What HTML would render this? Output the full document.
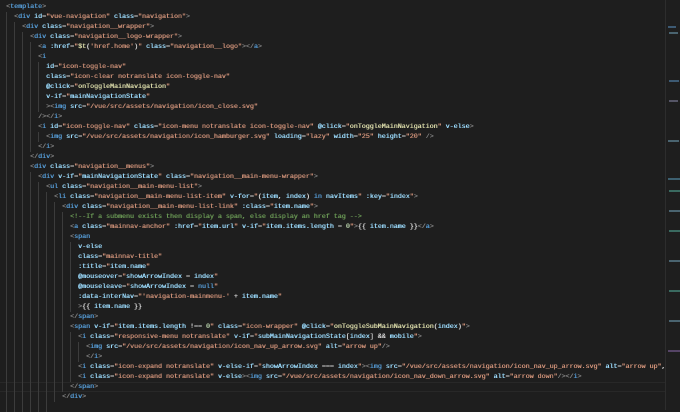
<!DOCTYPE html>
<html><head><meta charset="utf-8"><style>
html,body{margin:0;padding:0;background:#1e1e1e;width:680px;height:410px;overflow:hidden}
#ed{position:absolute;left:0;top:2px;font-family:"Liberation Mono",monospace;font-size:6.67px;color:#d4d4d4;text-shadow:0.35px 0 currentColor}
.l{height:10px;line-height:10px;white-space:pre;padding-left:6px;position:relative}
.g{display:inline-block;height:10px;vertical-align:top;background:repeating-linear-gradient(to right,#3c3c3c 0 1px,transparent 1px 8px)}
.t{color:#569cd6}.p{color:#808080}.a{color:#9cdcfe}.s{color:#ce9178}.v{color:#9cdcfe}.f{color:#dcdcaa}.c{color:#6a9955}.k{color:#569cd6}.n{color:#b5cea8}
#hl{position:absolute;left:0;top:382px;width:665px;height:10px;border-top:1px solid #282828;border-bottom:1px solid #282828;box-sizing:border-box}
#mm{position:absolute;left:665px;top:0;width:15px;height:410px;background:#1e1e1e;border-left:1px solid #2d2d2d}
#mm i{position:absolute;height:2px;display:block}
</style></head><body>
<div id="hl"></div>
<div id="ed">
<div class="l"><span class="p">&lt;</span><span class="t">template</span><span class="p">&gt;</span></div>
<div class="l"><span class="g" style="width:8px"></span><span class="p">&lt;</span><span class="t">div</span> <span class="a">id</span>=<span class="s">"vue-navigation"</span> <span class="a">class</span>=<span class="s">"navigation"</span><span class="p">&gt;</span></div>
<div class="l"><span class="g" style="width:16px"></span><span class="p">&lt;</span><span class="t">div</span> <span class="a">class</span>=<span class="s">"navigation__wrapper"</span><span class="p">&gt;</span></div>
<div class="l"><span class="g" style="width:24px"></span><span class="p">&lt;</span><span class="t">div</span> <span class="a">class</span>=<span class="s">"navigation__logo-wrapper"</span><span class="p">&gt;</span></div>
<div class="l"><span class="g" style="width:32px"></span><span class="p">&lt;</span><span class="t">a</span> <span class="a">:href</span>=<span class="s">"</span><span class="f">$t</span>(<span class="s">'href.home'</span>)<span class="s">"</span> <span class="a">class</span>=<span class="s">"navigation__logo"</span><span class="p">&gt;&lt;/</span><span class="t">a</span><span class="p">&gt;</span></div>
<div class="l"><span class="g" style="width:32px"></span><span class="p">&lt;</span><span class="t">i</span></div>
<div class="l"><span class="g" style="width:40px"></span><span class="a">id</span>=<span class="s">"icon-toggle-nav"</span></div>
<div class="l"><span class="g" style="width:40px"></span><span class="a">class</span>=<span class="s">"icon-clear notranslate icon-toggle-nav"</span></div>
<div class="l"><span class="g" style="width:40px"></span><span class="a">@click</span>=<span class="s">"</span><span class="f">onToggleMainNavigation</span><span class="s">"</span></div>
<div class="l"><span class="g" style="width:40px"></span><span class="a">v-if</span>=<span class="s">"</span><span class="v">mainNavigationState</span><span class="s">"</span></div>
<div class="l"><span class="g" style="width:40px"></span><span class="p">&gt;&lt;</span><span class="t">img</span> <span class="a">src</span>=<span class="s">"/vue/src/assets/navigation/icon_close.svg"</span></div>
<div class="l"><span class="g" style="width:32px"></span><span class="p">/&gt;&lt;/</span><span class="t">i</span><span class="p">&gt;</span></div>
<div class="l"><span class="g" style="width:32px"></span><span class="p">&lt;</span><span class="t">i</span> <span class="a">id</span>=<span class="s">"icon-toggle-nav"</span> <span class="a">class</span>=<span class="s">"icon-menu notranslate icon-toggle-nav"</span> <span class="a">@click</span>=<span class="s">"</span><span class="f">onToggleMainNavigation</span><span class="s">"</span> <span class="a">v-else</span><span class="p">&gt;</span></div>
<div class="l"><span class="g" style="width:40px"></span><span class="p">&lt;</span><span class="t">img</span> <span class="a">src</span>=<span class="s">"/vue/src/assets/navigation/icon_hamburger.svg"</span> <span class="a">loading</span>=<span class="s">"lazy"</span> <span class="a">width</span>=<span class="s">"25"</span> <span class="a">height</span>=<span class="s">"20"</span> <span class="p">/&gt;</span></div>
<div class="l"><span class="g" style="width:32px"></span><span class="p">&lt;/</span><span class="t">i</span><span class="p">&gt;</span></div>
<div class="l"><span class="g" style="width:24px"></span><span class="p">&lt;/</span><span class="t">div</span><span class="p">&gt;</span></div>
<div class="l"><span class="g" style="width:24px"></span><span class="p">&lt;</span><span class="t">div</span> <span class="a">class</span>=<span class="s">"navigation__menus"</span><span class="p">&gt;</span></div>
<div class="l"><span class="g" style="width:32px"></span><span class="p">&lt;</span><span class="t">div</span> <span class="a">v-if</span>=<span class="s">"</span><span class="v">mainNavigationState</span><span class="s">"</span> <span class="a">class</span>=<span class="s">"navigation__main-menu-wrapper"</span><span class="p">&gt;</span></div>
<div class="l"><span class="g" style="width:40px"></span><span class="p">&lt;</span><span class="t">ul</span> <span class="a">class</span>=<span class="s">"navigation__main-menu-list"</span><span class="p">&gt;</span></div>
<div class="l"><span class="g" style="width:48px"></span><span class="p">&lt;</span><span class="t">li</span> <span class="a">class</span>=<span class="s">"navigation__main-menu-list-item"</span> <span class="a">v-for</span>=<span class="s">"</span>(<span class="v">item</span>, <span class="v">index</span>) <span class="k">in</span> <span class="v">navItems</span><span class="s">"</span> <span class="a">:key</span>=<span class="s">"</span><span class="v">index</span><span class="s">"</span><span class="p">&gt;</span></div>
<div class="l"><span class="g" style="width:56px"></span><span class="p">&lt;</span><span class="t">div</span> <span class="a">class</span>=<span class="s">"navigation__main-menu-list-link"</span> <span class="a">:class</span>=<span class="s">"</span><span class="v">item.name</span><span class="s">"</span><span class="p">&gt;</span></div>
<div class="l"><span class="g" style="width:64px"></span><span class="c">&lt;!--If a submenu exists then display a span, else display an href tag --&gt;</span></div>
<div class="l"><span class="g" style="width:64px"></span><span class="p">&lt;</span><span class="t">a</span> <span class="a">class</span>=<span class="s">"mainnav-anchor"</span> <span class="a">:href</span>=<span class="s">"</span><span class="v">item.url</span><span class="s">"</span> <span class="a">v-if</span>=<span class="s">"</span><span class="v">item.items.length</span> = <span class="n">0</span><span class="s">"</span><span class="p">&gt;</span>{{ <span class="v">item.name</span> }}<span class="p">&lt;/</span><span class="t">a</span><span class="p">&gt;</span></div>
<div class="l"><span class="g" style="width:64px"></span><span class="p">&lt;</span><span class="t">span</span></div>
<div class="l"><span class="g" style="width:72px"></span><span class="a">v-else</span></div>
<div class="l"><span class="g" style="width:72px"></span><span class="a">class</span>=<span class="s">"mainnav-title"</span></div>
<div class="l"><span class="g" style="width:72px"></span><span class="a">:title</span>=<span class="s">"</span><span class="v">item.name</span><span class="s">"</span></div>
<div class="l"><span class="g" style="width:72px"></span><span class="a">@mouseover</span>=<span class="s">"</span><span class="v">showArrowIndex</span> = <span class="v">index</span><span class="s">"</span></div>
<div class="l"><span class="g" style="width:72px"></span><span class="a">@mouseleave</span>=<span class="s">"</span><span class="v">showArrowIndex</span> = <span class="k">null</span><span class="s">"</span></div>
<div class="l"><span class="g" style="width:72px"></span><span class="a">:data-interNav</span>=<span class="s">"'navigation-mainmenu-'</span> + <span class="v">item.name</span><span class="s">"</span></div>
<div class="l"><span class="g" style="width:72px"></span><span class="p">&gt;</span>{{ <span class="v">item.name</span> }}</div>
<div class="l"><span class="g" style="width:64px"></span><span class="p">&lt;/</span><span class="t">span</span><span class="p">&gt;</span></div>
<div class="l"><span class="g" style="width:64px"></span><span class="p">&lt;</span><span class="t">span</span> <span class="a">v-if</span>=<span class="s">"</span><span class="v">item.items.length</span> !== <span class="n">0</span><span class="s">"</span> <span class="a">class</span>=<span class="s">"icon-wrapper"</span> <span class="a">@click</span>=<span class="s">"</span><span class="f">onToggleSubMainNavigation</span>(<span class="v">index</span>)<span class="s">"</span><span class="p">&gt;</span></div>
<div class="l"><span class="g" style="width:72px"></span><span class="p">&lt;</span><span class="t">i</span> <span class="a">class</span>=<span class="s">"responsive-menu notranslate"</span> <span class="a">v-if</span>=<span class="s">"</span><span class="v">subMainNavigationState</span>[<span class="v">index</span>] &amp;&amp; <span class="v">mobile</span><span class="s">"</span><span class="p">&gt;</span></div>
<div class="l"><span class="g" style="width:80px"></span><span class="p">&lt;</span><span class="t">img</span> <span class="a">src</span>=<span class="s">"/vue/src/assets/navigation/icon_nav_up_arrow.svg"</span> <span class="a">alt</span>=<span class="s">"arrow up"</span><span class="p">/&gt;</span></div>
<div class="l"><span class="g" style="width:80px"></span><span class="p">&lt;/</span><span class="t">i</span><span class="p">&gt;</span></div>
<div class="l"><span class="g" style="width:72px"></span><span class="p">&lt;</span><span class="t">i</span> <span class="a">class</span>=<span class="s">"icon-expand notranslate"</span> <span class="a">v-else-if</span>=<span class="s">"</span><span class="v">showArrowIndex</span> === <span class="v">index</span><span class="s">"</span><span class="p">&gt;&lt;</span><span class="t">img</span> <span class="a">src</span>=<span class="s">"/vue/src/assets/navigation/icon_nav_up_arrow.svg"</span> <span class="a">alt</span>=<span class="s">"arrow up"</span>,</div>
<div class="l"><span class="g" style="width:72px"></span><span class="p">&lt;</span><span class="t">i</span> <span class="a">class</span>=<span class="s">"icon-expand notranslate"</span> <span class="a">v-else</span><span class="p">&gt;&lt;</span><span class="t">img</span> <span class="a">src</span>=<span class="s">"/vue/src/assets/navigation/icon_nav_down_arrow.svg"</span> <span class="a">alt</span>=<span class="s">"arrow down"</span><span class="p">/&gt;&lt;/</span><span class="t">i</span><span class="p">&gt;</span></div>
<div class="l"><span class="g" style="width:64px"></span><span class="p">&lt;/</span><span class="t">span</span><span class="p">&gt;</span></div>
<div class="l"><span class="g" style="width:56px"></span><span class="p">&lt;/</span><span class="t">div</span><span class="p">&gt;</span></div>
<div class="l"><span class="g" style="width:48px"></span></div>
</div>
<div id="mm">
<i style="left:2px;top:26px;width:8px;background:#3d5a73"></i>
<i style="left:3px;top:32px;width:9px;background:#4a6470"></i>
<i style="left:3px;top:80px;width:10px;background:#3d5a73"></i>
<i style="left:3px;top:100px;width:9px;background:#556"></i>
<i style="left:2px;top:140px;width:11px;background:#4a6470"></i>
<i style="left:2px;top:178px;width:12px;background:#3d6070"></i>
<i style="left:3px;top:190px;width:11px;background:#3a6a60"></i>
<i style="left:3px;top:210px;width:11px;background:#4a6470"></i>
<i style="left:3px;top:230px;width:11px;background:#3a6a60"></i>
<i style="left:3px;top:260px;width:11px;background:#4a6470"></i>
<i style="left:3px;top:290px;width:11px;background:#3a6a60"></i>
<i style="left:3px;top:320px;width:11px;background:#4a6470"></i>
<i style="left:2px;top:350px;width:12px;background:#554466"></i>
</div>
</body></html>
